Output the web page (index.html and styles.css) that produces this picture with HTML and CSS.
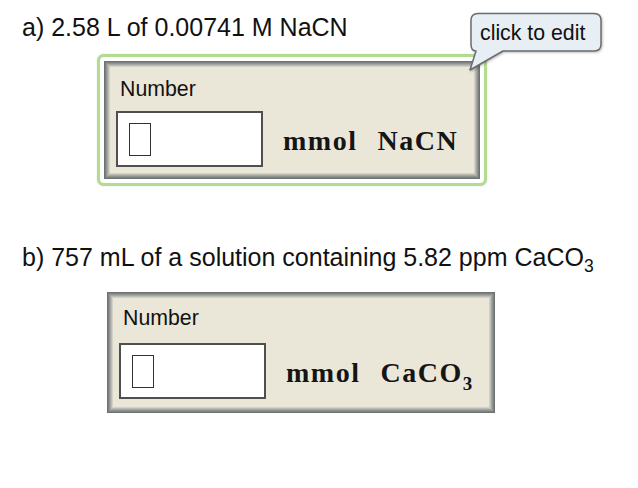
FILE: index.html
```html
<!DOCTYPE html>
<html>
<head>
<meta charset="utf-8">
<link rel="stylesheet" href="styles.css">
</head>
<body>
<div class="page">
  <section class="q q-a">
    <p class="title">a) 2.58 L of 0.00741 M NaCN</p>
    <div class="frame">
      <div class="box box-a">
        <div class="label">Number</div>
        <div class="row">
          <div class="input"><span class="caret"></span></div>
          <div class="unit"><span class="u1">mmol</span><span class="u2">NaCN</span></div>
        </div>
      </div>
    </div>
  </section>
  <section class="q q-b">
    <p class="title">b) 757 mL of a solution containing 5.82 ppm CaCO<sub class="tsub">3</sub></p>
    <div class="box box-b">
      <div class="label">Number</div>
      <div class="row">
        <div class="input"><span class="caret"></span></div>
        <div class="unit"><span class="u1">mmol</span><span class="u2">CaCO<sub class="usub">3</sub></span></div>
      </div>
    </div>
  </section>
  <div class="callout">
    <svg class="bubble" width="142" height="66" viewBox="0 0 142 66">
      <path d="M12 3.5 H128 Q135 3.5 135 10.5 V34 Q135 41 128 41 H37 L4 60 L10 41 Q5 41 5 34 V10.5 Q5 3.5 12 3.5 Z" fill="#e7eef4" stroke="#6a6d6f" stroke-width="1.5" stroke-linejoin="round"/>
    </svg>
    <span class="callout-text">click to edit</span>
  </div>
</div>
</body>
</html>
```
FILE: styles.css
```css
html, body {
  margin: 0;
  padding: 0;
  background: #ffffff;
}
.page {
  position: relative;
  width: 638px;
  height: 488px;
  font-family: "Liberation Sans", Arial, sans-serif;
  color: #111;
}
.title {
  margin: 0;
  padding-left: 22px;
  font-size: 25px;
  line-height: 30px;
  white-space: nowrap;
}
.q-a {
  padding-top: 12px;
}
.q-a .frame {
  margin: 12px 0 0 97px;
  width: 376px;
  padding: 4px;
  border: 3px solid #b2dc90;
  border-radius: 7px;
  background: #fff;
  box-shadow: 0 0 1px rgba(120, 160, 90, 0.6);
}
.q-b {
  padding-top: 56px;
}
.q-b .box {
  margin: 20px 0 0 107px;
}
.tsub {
  font-size: 17.5px;
  vertical-align: -6px;
  line-height: 0;
}
.box {
  box-sizing: border-box;
  background: #ebe7d8;
  padding: 16px 12px 12px 12px;
  box-shadow:
    inset 0 0 0 1px #6c7270,
    inset 0 0 0 2px #7d8280,
    inset 0 0 0 3px #909391,
    inset 0 0 0 4px #a5a7a3,
    inset 0 0 0 5px #bcbdb5,
    inset 0 0 0 6px #d3d1c5;
}
.box-a {
  width: 376px;
  height: 118px;
}
.box-b {
  width: 388px;
  height: 121px;
  padding-top: 14px;
}
.label {
  font-size: 21.3px;
  line-height: 24px;
  padding-left: 4px;
}
.row {
  display: flex;
  align-items: center;
  margin-top: 10px;
}
.box-b .row {
  margin-top: 13px;
}
.input {
  box-sizing: border-box;
  width: 147px;
  height: 56px;
  background: #fff;
  border: 2px solid #4f4f4f;
  padding: 10px 0 0 11px;
}
.caret {
  display: block;
  box-sizing: border-box;
  width: 22px;
  height: 33px;
  border: 1.5px solid #333;
}
.unit {
  margin-left: 20px;
  margin-top: 4px;
  font-family: "Liberation Serif", "Times New Roman", serif;
  font-weight: bold;
  font-size: 28px;
  letter-spacing: 1.5px;
  color: #151515;
  white-space: nowrap;
}
.u2 {
  margin-left: 20px;
}
.usub {
  font-size: 19px;
  vertical-align: -8px;
  line-height: 0;
}
.callout {
  position: absolute;
  left: 466px;
  top: 10px;
  width: 142px;
  height: 66px;
}
.bubble {
  display: block;
  filter: drop-shadow(1px 1px 1px rgba(0, 0, 0, 0.25));
}
.callout-text {
  position: absolute;
  left: 14px;
  top: 11px;
  font-size: 21.3px;
  line-height: 24px;
  color: #111;
  white-space: nowrap;
}
```
